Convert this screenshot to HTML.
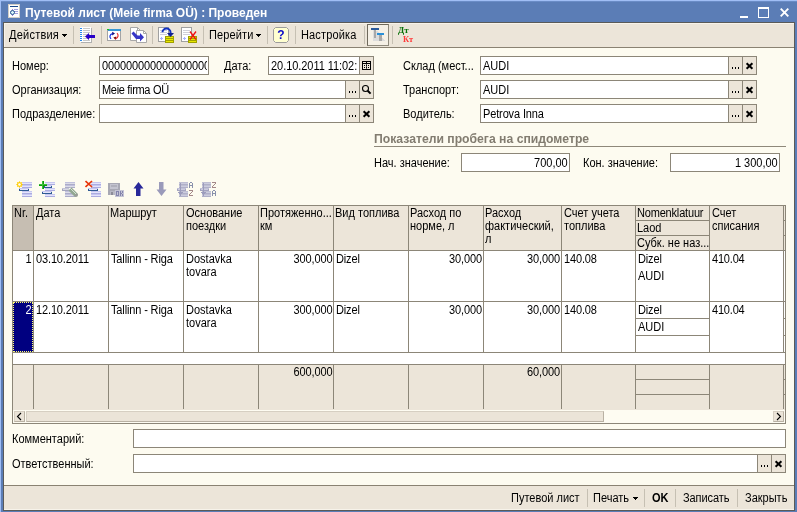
<!DOCTYPE html>
<html><head><meta charset="utf-8">
<style>
*{box-sizing:border-box;margin:0;padding:0}
html,body{width:797px;height:512px;overflow:hidden;background:#5a7db5;font-family:"Liberation Sans",sans-serif;font-size:11px;color:#000}
.abs{position:absolute}
#win{position:absolute;left:0;top:0;width:797px;height:512px;background:#5b7db6;will-change:transform}
#topl{position:absolute;left:0;top:0;width:797px;height:1px;background:#a0bef5}
#topl2{position:absolute;left:1px;top:1px;width:796px;height:1px;background:#6a8cc6}
#leftl{position:absolute;left:0;top:0;width:1px;height:512px;background:#a0bef5}
#inner{position:absolute;left:3px;top:22px;width:792px;height:489px;background:#5a5a58}
#title{position:absolute;left:25px;top:6px;color:#fff;font-weight:bold;font-size:12px;line-height:14px;white-space:nowrap;letter-spacing:0px}
#tb{position:absolute;left:4px;top:23px;width:790px;height:24px;background:#ece5d9;border-left:1px solid #f8f3ea;border-top:1px solid #f8f3ea}
#tbline{position:absolute;left:4px;top:47px;width:790px;height:1px;background:#8a8272}
#body{position:absolute;left:4px;top:48px;width:790px;height:437px;background:#fdfbf0}
#foot{position:absolute;left:4px;top:485px;width:790px;height:25px;background:#ece5d9;border-top:1px solid #8a8272;border-bottom:1px solid #f7f3ea}
.lbl{position:absolute;white-space:nowrap;font-size:12px;line-height:13px;transform:scaleX(0.917);transform-origin:0 0}
.lbl.ra{transform-origin:100% 0}
.t{display:inline-block;font-size:12px;line-height:13px;transform:scaleX(0.917);transform-origin:0 0;white-space:nowrap}
.r .t{transform-origin:100% 0}
.inp{position:absolute;height:19px;background:#fff;border:1px solid #8c8678;font-size:11px;line-height:13px;padding:3px 0 0 2px;white-space:nowrap;overflow:hidden}
.btn{position:absolute;height:19px;width:15px;background:#ece5d9;border:1px solid #8c8678;border-left:none;font-size:11px;line-height:13px;text-align:center;font-weight:bold}
.clip{display:block;overflow:hidden;white-space:nowrap;height:13px}
.r{text-align:right;padding-right:1px}
.btn svg{position:absolute;left:0;top:0}
.tbt{position:absolute;top:29px;font-size:12px;line-height:13px;white-space:nowrap;transform:scaleX(0.917);transform-origin:0 0}
.sb{background:#ebe4d8;border:1px solid #b9b1a3;border-top-color:#d6cfc2;border-left-color:#d6cfc2}
.sep{position:absolute;top:26px;width:1px;height:18px;background:#c6c0b3}
</style></head><body>
<div id="win">
<div id="topl"></div><div id="topl2"></div><div id="leftl"></div><div id="inner"></div>
<!-- title icon -->
<svg class="abs" style="left:8px;top:4px" width="12" height="14" viewBox="0 0 12 14"><rect x="0" y="0" width="12" height="14" fill="#d2cec6"/><rect x="1" y="1" width="10" height="12" fill="#fff"/><rect x="2" y="2" width="8" height="1" fill="#1c4a8c" shape-rendering="crispEdges"/><rect x="6" y="5" width="4" height="1" fill="#a0a0e0"/><rect x="6" y="7" width="4" height="1" fill="#a0a0e0"/><rect x="7" y="9" width="3" height="1" fill="#a0a0e0"/><circle cx="4.5" cy="8.5" r="2" fill="#d8f4f8" stroke="#1c4a8c" stroke-width="1"/><rect x="4" y="5" width="1" height="1" fill="#9c80d8"/><rect x="4" y="11" width="1" height="1" fill="#9c80d8"/></svg>
<div id="title">Путевой лист (Meie firma OÜ) : Проведен</div>
<!-- window buttons -->
<div class="abs" style="left:740px;top:16px;width:8px;height:2px;background:#fff"></div>
<div class="abs" style="left:758px;top:7px;width:11px;height:11px;border:1px solid #fff;border-top:2px solid #fff"></div>
<svg class="abs" style="left:780px;top:8px" width="9" height="9" viewBox="0 0 9 9"><path d="M0.7 0.7L8.3 8.3M8.3 0.7L0.7 8.3" stroke="#fff" stroke-width="1.9"/></svg>

<div id="tb"></div>
<div id="tbline"></div>
<div class="tbt" style="left:9px;letter-spacing:0.25px">Действия</div>
<svg class="abs" style="left:62px;top:34px" width="5" height="3" shape-rendering="crispEdges"><rect x="0" y="0" width="5" height="1"/><rect x="1" y="1" width="3" height="1"/><rect x="2" y="2" width="1" height="1"/></svg>
<div class="sep" style="left:73px"></div>
<div class="sep" style="left:101px"></div>
<div class="sep" style="left:152px"></div>
<div class="sep" style="left:203px"></div>
<div class="tbt" style="left:209px;letter-spacing:0.15px">Перейти</div>
<svg class="abs" style="left:256px;top:34px" width="5" height="3" shape-rendering="crispEdges"><rect x="0" y="0" width="5" height="1"/><rect x="1" y="1" width="3" height="1"/><rect x="2" y="2" width="1" height="1"/></svg>
<div class="sep" style="left:267px"></div>
<div class="sep" style="left:295px"></div>
<div class="tbt" style="left:301px;letter-spacing:0.15px">Настройка</div>
<div class="sep" style="left:364px"></div>
<div class="sep" style="left:392px"></div>

<div id="body"></div>
<!-- icons -->
<svg class="abs" style="left:79px;top:27px" width="17" height="16" viewBox="0 0 17 16" ><rect x="1" y="0" width="11" height="15" fill="#fff"/><rect x="12" y="1" width="1" height="15" fill="#b0b0b0"/><rect x="2" y="15" width="11" height="1" fill="#b0b0b0"/><rect x="1" y="1" width="2" height="1" fill="#2a8cf0"/><rect x="4" y="1" width="7" height="1" fill="#c8c8c8"/><rect x="1" y="3" width="2" height="1" fill="#2a8cf0"/><rect x="4" y="3" width="7" height="1" fill="#c8c8c8"/><rect x="1" y="5" width="2" height="1" fill="#2a8cf0"/><rect x="4" y="5" width="7" height="1" fill="#c8c8c8"/><rect x="1" y="7" width="2" height="1" fill="#2a8cf0"/><rect x="4" y="7" width="7" height="1" fill="#c8c8c8"/><rect x="1" y="9" width="2" height="1" fill="#2a8cf0"/><rect x="4" y="9" width="7" height="1" fill="#c8c8c8"/><rect x="1" y="11" width="2" height="1" fill="#2a8cf0"/><rect x="4" y="11" width="7" height="1" fill="#c8c8c8"/><rect x="1" y="13" width="2" height="1" fill="#2a8cf0"/><rect x="4" y="13" width="7" height="1" fill="#c8c8c8"/><path d="M6 9.5L10 6V8H16V11H10V13Z" fill="#2800c8"/></svg>
<svg class="abs" style="left:107px;top:28px" width="15" height="13" viewBox="0 0 15 13"><rect x="0.5" y="1.5" width="13" height="11" fill="#fff" stroke="#a4a4a4"/><rect x="1" y="1" width="13" height="2" fill="#3898d4"/><rect x="0" y="1" width="2" height="1" fill="#18c818"/><path d="M4 10.8C2.2 9 2.6 6.3 5.5 5.6" stroke="#1030e8" stroke-width="1.2" fill="none"/><path d="M5.2 3.8L8 5.6L5.2 7.4Z" fill="#0c0c80"/><path d="M10 5.2C11.8 7 11.4 9.7 8.8 10.6" stroke="#e83030" stroke-width="1.2" fill="none"/><path d="M9.4 8.6L6.4 9.4L8.6 12Z" fill="#800808"/></svg>
<svg class="abs" style="left:130px;top:27px" width="17" height="16" viewBox="0 0 17 16"><path d="M0.5 0.5H7.5L10.5 3.5V13.5H0.5Z" fill="#fff" stroke="#a8a8a8"/><path d="M7.5 0.5V3.5H10.5" fill="none" stroke="#a8a8a8"/><path d="M6.5 3.5H13.5L16.5 6.5V15.5H6.5Z" fill="#fff" stroke="#a8a8a8"/><path d="M13.5 3.5V6.5H16.5" fill="none" stroke="#a8a8a8"/><path d="M1.5 6.5L3.5 4.5L7.5 8.5H10V6L14 10.2L10 14.4V12H6Z" fill="#3636c6"/></svg>
<svg class="abs" style="left:158px;top:27px" width="16" height="16" viewBox="0 0 16 16" ><rect x="0.5" y="0.5" width="10" height="14" fill="#fff" stroke="#a0a0a0"/><rect x="2" y="3" width="7" height="1" fill="#d0d0d8"/><rect x="2" y="5" width="7" height="1" fill="#d0d0d8"/><rect x="2" y="7" width="7" height="1" fill="#d0d0d8"/><rect x="3" y="10" width="1" height="3" fill="#a8b4ff"/><rect x="2" y="11" width="3" height="1" fill="#a8b4ff"/><rect x="7" y="9" width="9" height="7" fill="#e8e800"/><rect x="7" y="9" width="9" height="1" fill="#a0a000"/><rect x="7" y="11" width="9" height="1" fill="#a0a000"/><rect x="7" y="13" width="9" height="1" fill="#a0a000"/><rect x="7" y="15" width="9" height="1" fill="#a0a000"/><rect x="7" y="9" width="1" height="7" fill="#a0a000"/><rect x="15" y="9" width="1" height="7" fill="#a0a000"/><path d="M4.5 5.2A4 3.6 0 0 1 12.5 5.2V6.5" stroke="#1030c0" stroke-width="2" fill="none"/><path d="M9 6H16L12.5 10Z" fill="#102090"/></svg>
<svg class="abs" style="left:181px;top:27px" width="16" height="16" viewBox="0 0 16 16" ><rect x="0.5" y="0.5" width="10" height="14" fill="#fff" stroke="#a0a0a0"/><rect x="2" y="3" width="7" height="1" fill="#d0d0d8"/><rect x="2" y="5" width="7" height="1" fill="#d0d0d8"/><rect x="2" y="7" width="7" height="1" fill="#d0d0d8"/><rect x="3" y="10" width="1" height="3" fill="#a8b4ff"/><rect x="2" y="11" width="3" height="1" fill="#a8b4ff"/><rect x="7" y="9" width="9" height="7" fill="#e8e800"/><rect x="7" y="9" width="9" height="1" fill="#a0a000"/><rect x="7" y="11" width="9" height="1" fill="#a0a000"/><rect x="7" y="13" width="9" height="1" fill="#a0a000"/><rect x="7" y="15" width="9" height="1" fill="#a0a000"/><rect x="7" y="9" width="1" height="7" fill="#a0a000"/><rect x="15" y="9" width="1" height="7" fill="#a0a000"/><path d="M9 4.5L15 12.5M15 4.5L9 12.5" stroke="#f01010" stroke-width="1.3"/></svg>
<svg class="abs" style="left:273px;top:27px" width="16" height="16" viewBox="0 0 16 16" ><path d="M2.5 0.5H13.5L15.5 2.5V13.5L13.5 15.5H2.5L0.5 13.5V2.5Z" fill="#ffffd0" stroke="#9c9c9c"/><text x="8" y="12" font-family="Liberation Sans" font-weight="bold" font-size="12" fill="#0808c8" text-anchor="middle">?</text></svg>
<div class="abs" style="left:367px;top:24px;width:22px;height:22px;background:#f5f0e6;border:1px solid #6e695c;border-right-color:#8e897c;border-bottom-color:#8e897c"></div>
<svg class="abs" style="left:371px;top:28px" width="14" height="14" viewBox="0 0 14 14" shape-rendering="crispEdges"><path d="M2 2V13H14L8 7V4Z" fill="#dcdcdc"/><rect x="0" y="0" width="8" height="2" fill="#2a5a9a"/><rect x="3" y="2" width="2" height="8" fill="#a8a8a8"/><rect x="6" y="5" width="7" height="2" fill="#2a90d8"/><rect x="8" y="7" width="3" height="6" fill="#a8a8a8"/></svg>
<div class="abs" style="left:398px;top:27px;font-family:'Liberation Serif',serif;font-weight:bold;font-size:8px;line-height:8px;color:#087008;transform:scaleX(1.12);transform-origin:0 0">Дт</div>
<div class="abs" style="left:403px;top:36px;font-family:'Liberation Serif',serif;font-weight:bold;font-size:7.5px;line-height:8px;color:#ff3838;transform:scaleX(1.12);transform-origin:0 0">Кт</div>
<svg class="abs" style="left:16px;top:181px" width="17" height="17" viewBox="0 0 17 17" shape-rendering="crispEdges"><rect x="6" y="1" width="10" height="1" fill="#c6c6f0"/><rect x="6" y="2" width="10" height="1" fill="#e4e4fb"/><rect x="6" y="3" width="10" height="1" fill="#acace0"/><rect x="6" y="4" width="10" height="1" fill="#c6c6f0"/><rect x="6" y="5" width="10" height="1" fill="#e4e4fb"/><rect x="6" y="6" width="10" height="1" fill="#acace0"/><rect x="3" y="7" width="10" height="1" fill="#c6c6f0"/><rect x="3" y="8" width="10" height="1" fill="#e4e4fb"/><rect x="3" y="9" width="10" height="1" fill="#2f5a92"/><rect x="3" y="8" width="1" height="2" fill="#2f5a92"/><rect x="12" y="8" width="1" height="2" fill="#2f5a92"/><rect x="6" y="10" width="10" height="1" fill="#c6c6f0"/><rect x="6" y="11" width="10" height="1" fill="#e4e4fb"/><rect x="6" y="12" width="10" height="1" fill="#acace0"/><rect x="6" y="13" width="10" height="1" fill="#c6c6f0"/><rect x="6" y="14" width="10" height="1" fill="#e4e4fb"/><rect x="6" y="15" width="10" height="1" fill="#acace0"/><g shape-rendering="auto"><path d="M3.5 0L4.4 1.6L6 1L5.6 2.7L7 3.5L5.6 4.4L6 6L4.4 5.5L3.5 7L2.6 5.5L1 6L1.4 4.4L0 3.5L1.4 2.7L1 1L2.6 1.6Z" fill="#ffcc00"/><circle cx="3.5" cy="3.5" r="1.3" fill="#fff"/></g></svg>
<svg class="abs" style="left:39px;top:181px" width="17" height="17" viewBox="0 0 17 17" shape-rendering="crispEdges"><rect x="6" y="1" width="10" height="1" fill="#c6c6f0"/><rect x="6" y="2" width="10" height="1" fill="#e4e4fb"/><rect x="6" y="3" width="10" height="1" fill="#acace0"/><rect x="5" y="4" width="8" height="1" fill="#c6c6f0"/><rect x="5" y="5" width="8" height="1" fill="#e4e4fb"/><rect x="5" y="6" width="8" height="1" fill="#2f5a92"/><rect x="5" y="5" width="1" height="2" fill="#2f5a92"/><rect x="12" y="5" width="1" height="2" fill="#2f5a92"/><rect x="6" y="7" width="10" height="1" fill="#c6c6f0"/><rect x="6" y="8" width="10" height="1" fill="#e4e4fb"/><rect x="6" y="9" width="10" height="1" fill="#acace0"/><rect x="3" y="10" width="10" height="1" fill="#c6c6f0"/><rect x="3" y="11" width="10" height="1" fill="#e4e4fb"/><rect x="3" y="12" width="10" height="1" fill="#2f5a92"/><rect x="3" y="11" width="1" height="2" fill="#2f5a92"/><rect x="12" y="11" width="1" height="2" fill="#2f5a92"/><rect x="6" y="13" width="10" height="1" fill="#c6c6f0"/><rect x="6" y="14" width="10" height="1" fill="#e4e4fb"/><rect x="6" y="15" width="10" height="1" fill="#acace0"/><rect x="3" y="0" width="2" height="8" fill="#0a9a0a"/><rect x="0" y="3" width="8" height="2" fill="#0a9a0a"/><rect x="3" y="0" width="1" height="8" fill="#38c038"/><rect x="0" y="3" width="8" height="1" fill="#38c038"/></svg>
<svg class="abs" style="left:62px;top:181px" width="17" height="17" viewBox="0 0 17 17" shape-rendering="crispEdges"><rect x="3" y="1" width="10" height="1" fill="#c0c0dc"/><rect x="3" y="2" width="10" height="1" fill="#dcdce8"/><rect x="3" y="3" width="10" height="1" fill="#acacc8"/><rect x="3" y="4" width="10" height="1" fill="#c0c0dc"/><rect x="3" y="5" width="10" height="1" fill="#dcdce8"/><rect x="3" y="6" width="10" height="1" fill="#acacc8"/><rect x="0" y="7" width="10" height="1" fill="#c4c4d8"/><rect x="0" y="8" width="10" height="1" fill="#d8d8e4"/><rect x="0" y="9" width="10" height="1" fill="#a4a4bc"/><rect x="0" y="8" width="1" height="2" fill="#a4a4bc"/><rect x="9" y="8" width="1" height="2" fill="#a4a4bc"/><rect x="3" y="10" width="10" height="1" fill="#c0c0dc"/><rect x="3" y="11" width="10" height="1" fill="#dcdce8"/><rect x="3" y="12" width="10" height="1" fill="#acacc8"/><rect x="3" y="13" width="10" height="1" fill="#c0c0dc"/><rect x="3" y="14" width="10" height="1" fill="#dcdce8"/><rect x="3" y="15" width="10" height="1" fill="#acacc8"/><g shape-rendering="auto"><path d="M7 7L9.5 6.5L16 13L15.5 15.5L13 16L6.5 9.5Z" fill="#92a892"/><path d="M8.5 7.5L15 14" stroke="#d4e0d4" stroke-width="1"/><path d="M7 7L9.5 6.5L6.5 9.5Z" fill="#f4f4f4"/><path d="M14.5 12.5L16 14L14 16L12.5 14.5Z" fill="#9a9a9a"/></g></svg>
<svg class="abs" style="left:85px;top:180px" width="17" height="18" viewBox="0 0 17 18" shape-rendering="crispEdges"><rect x="6" y="2" width="10" height="1" fill="#c6c6f0"/><rect x="6" y="3" width="10" height="1" fill="#e4e4fb"/><rect x="6" y="4" width="10" height="1" fill="#acace0"/><rect x="6" y="5" width="10" height="1" fill="#c6c6f0"/><rect x="6" y="6" width="10" height="1" fill="#e4e4fb"/><rect x="6" y="7" width="10" height="1" fill="#acace0"/><rect x="3" y="8" width="10" height="1" fill="#c6c6f0"/><rect x="3" y="9" width="10" height="1" fill="#e4e4fb"/><rect x="3" y="10" width="10" height="1" fill="#2f5a92"/><rect x="3" y="9" width="1" height="2" fill="#2f5a92"/><rect x="12" y="9" width="1" height="2" fill="#2f5a92"/><rect x="6" y="11" width="10" height="1" fill="#c6c6f0"/><rect x="6" y="12" width="10" height="1" fill="#e4e4fb"/><rect x="6" y="13" width="10" height="1" fill="#acace0"/><rect x="6" y="14" width="10" height="1" fill="#c6c6f0"/><rect x="6" y="15" width="10" height="1" fill="#e4e4fb"/><rect x="6" y="16" width="10" height="1" fill="#acace0"/><g shape-rendering="auto"><path d="M0.5 1L7 7M7 1L0.5 7" stroke="#e83408" stroke-width="1.7"/></g></svg>
<svg class="abs" style="left:108px;top:183px" width="16" height="14" viewBox="0 0 16 14" shape-rendering="crispEdges"><rect x="0" y="0" width="12" height="12" fill="#a8a8b4"/><rect x="2" y="1" width="8" height="5" fill="#c4c4d0"/><rect x="3" y="2" width="6" height="2" fill="#b0b0bc"/><rect x="2" y="8" width="7" height="4" fill="#b8b8c4"/><rect x="3" y="9" width="2" height="3" fill="#8c8c98"/><rect x="7" y="7" width="9" height="7" fill="#c4c4d4"/><rect x="8" y="8" width="3" height="5" fill="#8484ac"/><rect x="9" y="9" width="1" height="3" fill="#c4c4d4"/><rect x="12" y="8" width="1" height="5" fill="#8484ac"/><rect x="13" y="10" width="1" height="1" fill="#8484ac"/><rect x="14" y="8" width="1" height="2" fill="#8484ac"/><rect x="14" y="11" width="1" height="2" fill="#8484ac"/></svg>
<svg class="abs" style="left:133px;top:182px" width="11" height="14" viewBox="0 0 11 14" ><path d="M5.5 0L10.5 6.5H7.5V14H3V6.5H0.5Z" fill="#28289a"/></svg>
<svg class="abs" style="left:156px;top:182px" width="11" height="14" viewBox="0 0 11 14" ><path d="M5.5 14L10.5 7.5H7.5V0H3V7.5H0.5Z" fill="#9a9aba"/></svg>
<svg class="abs" style="left:177px;top:181px" width="17" height="17" viewBox="0 0 17 17" shape-rendering="crispEdges"><rect x="2" y="1" width="9" height="1" fill="#bebed2"/><rect x="2" y="2" width="9" height="1" fill="#ccccde"/><rect x="2" y="3" width="9" height="1" fill="#b0b0c8"/><rect x="2" y="4" width="9" height="1" fill="#bebed2"/><rect x="2" y="5" width="9" height="1" fill="#ccccde"/><rect x="2" y="6" width="9" height="1" fill="#b0b0c8"/><rect x="0" y="7" width="9" height="1" fill="#c0c0d8"/><rect x="0" y="8" width="9" height="1" fill="#ccccde"/><rect x="0" y="9" width="9" height="1" fill="#a4a4c0"/><rect x="0" y="8" width="1" height="2" fill="#a4a4c0"/><rect x="8" y="8" width="1" height="2" fill="#a4a4c0"/><rect x="2" y="10" width="9" height="1" fill="#bebed2"/><rect x="2" y="11" width="9" height="1" fill="#ccccde"/><rect x="2" y="12" width="9" height="1" fill="#b0b0c8"/><rect x="2" y="13" width="9" height="1" fill="#bebed2"/><rect x="2" y="14" width="9" height="1" fill="#ccccde"/><rect x="2" y="15" width="9" height="1" fill="#b0b0c8"/><rect x="3" y="2" width="1" height="12" fill="#9c9cbc"/><rect x="1" y="11" width="5" height="1" fill="#9c9cbc"/><rect x="2" y="12" width="3" height="1" fill="#9c9cbc"/><rect x="3" y="13" width="1" height="2" fill="#9c9cbc"/><rect x="12" y="2" width="1" height="5" fill="#8890ac"/><rect x="15" y="2" width="1" height="5" fill="#8890ac"/><rect x="13" y="1" width="2" height="1" fill="#8890ac"/><rect x="13" y="4" width="2" height="1" fill="#8890ac"/><rect x="12" y="9" width="4" height="1" fill="#a48888"/><rect x="12" y="14" width="4" height="1" fill="#a48888"/><rect x="15" y="10" width="1" height="1" fill="#a48888"/><rect x="14" y="11" width="1" height="1" fill="#a48888"/><rect x="13" y="12" width="1" height="1" fill="#a48888"/><rect x="12" y="13" width="1" height="1" fill="#a48888"/></svg>
<svg class="abs" style="left:200px;top:181px" width="17" height="17" viewBox="0 0 17 17" shape-rendering="crispEdges"><rect x="2" y="1" width="9" height="1" fill="#bebed2"/><rect x="2" y="2" width="9" height="1" fill="#ccccde"/><rect x="2" y="3" width="9" height="1" fill="#b0b0c8"/><rect x="2" y="4" width="9" height="1" fill="#bebed2"/><rect x="2" y="5" width="9" height="1" fill="#ccccde"/><rect x="2" y="6" width="9" height="1" fill="#b0b0c8"/><rect x="0" y="7" width="9" height="1" fill="#c0c0d8"/><rect x="0" y="8" width="9" height="1" fill="#ccccde"/><rect x="0" y="9" width="9" height="1" fill="#a4a4c0"/><rect x="0" y="8" width="1" height="2" fill="#a4a4c0"/><rect x="8" y="8" width="1" height="2" fill="#a4a4c0"/><rect x="2" y="10" width="9" height="1" fill="#bebed2"/><rect x="2" y="11" width="9" height="1" fill="#ccccde"/><rect x="2" y="12" width="9" height="1" fill="#b0b0c8"/><rect x="2" y="13" width="9" height="1" fill="#bebed2"/><rect x="2" y="14" width="9" height="1" fill="#ccccde"/><rect x="2" y="15" width="9" height="1" fill="#b0b0c8"/><rect x="3" y="2" width="1" height="12" fill="#9c9cbc"/><rect x="1" y="11" width="5" height="1" fill="#9c9cbc"/><rect x="2" y="12" width="3" height="1" fill="#9c9cbc"/><rect x="3" y="13" width="1" height="2" fill="#9c9cbc"/><rect x="12" y="1" width="4" height="1" fill="#a48888"/><rect x="12" y="6" width="4" height="1" fill="#a48888"/><rect x="15" y="2" width="1" height="1" fill="#a48888"/><rect x="14" y="3" width="1" height="1" fill="#a48888"/><rect x="13" y="4" width="1" height="1" fill="#a48888"/><rect x="12" y="5" width="1" height="1" fill="#a48888"/><rect x="12" y="10" width="1" height="5" fill="#8890ac"/><rect x="15" y="10" width="1" height="5" fill="#8890ac"/><rect x="13" y="9" width="2" height="1" fill="#8890ac"/><rect x="13" y="12" width="2" height="1" fill="#8890ac"/></svg>
<!-- /icons -->

<!-- row 1 -->
<div class="lbl" style="left:12px;top:60px">Номер:</div>
<div class="inp" style="left:99px;top:56px;width:110px"><span class="clip" style="width:105px"><span class="t" style="letter-spacing:-0.13px">000000000000000000</span></span></div>
<div class="lbl" style="left:224px;top:60px">Дата:</div>
<div class="inp" style="left:268px;top:56px;width:92px"><span class="clip" style="width:87px"><span class="t" style="letter-spacing:-0.06px">20.10.2011 11:02:</span></span></div>
<div class="btn" style="left:360px;top:56px;width:14px"><svg width="13" height="17" shape-rendering="crispEdges"><rect x="2" y="4" width="9" height="9" fill="#000"/><rect x="3" y="5" width="3" height="1" fill="#efe8dc"/><rect x="7" y="5" width="3" height="1" fill="#efe8dc"/><rect x="3" y="7" width="7" height="5" fill="#efe8dc"/><rect x="4" y="8" width="1" height="1" fill="#000"/><rect x="6" y="8" width="1" height="1" fill="#000"/><rect x="8" y="8" width="1" height="1" fill="#000"/><rect x="4" y="10" width="1" height="1" fill="#000"/><rect x="6" y="10" width="1" height="1" fill="#000"/><rect x="8" y="10" width="1" height="1" fill="#000"/><rect x="6" y="7" width="1" height="1" fill="#555"/><rect x="6" y="9" width="1" height="1" fill="#555"/><rect x="6" y="11" width="1" height="1" fill="#555"/></svg></div>
<div class="lbl" style="left:403px;top:60px">Склад (мест...</div>
<div class="inp" style="left:480px;top:56px;width:249px"><span class="t">AUDI</span></div>
<div class="btn" style="left:729px;top:56px;width:14px"><svg width="13" height="17" shape-rendering="crispEdges"><rect x="3" y="10" width="1" height="2" fill="#000"/><rect x="6" y="10" width="1" height="2" fill="#000"/><rect x="9" y="10" width="1" height="2" fill="#000"/></svg></div>
<div class="btn" style="left:743px;top:56px;width:14px"><svg width="13" height="17"><path d="M3.6 6.2L9.4 11.8M9.4 6.2L3.6 11.8" stroke="#000" stroke-width="2"/></svg></div>
<!-- row 2 -->
<div class="lbl" style="left:12px;top:84px">Организация:</div>
<div class="inp" style="left:99px;top:80px;width:247px;letter-spacing:-0.35px"><span class="t">Meie firma OÜ</span></div>
<div class="btn" style="left:346px;top:80px;width:14px"><svg width="13" height="17" shape-rendering="crispEdges"><rect x="3" y="10" width="1" height="2" fill="#000"/><rect x="6" y="10" width="1" height="2" fill="#000"/><rect x="9" y="10" width="1" height="2" fill="#000"/></svg></div>
<div class="btn" style="left:360px;top:80px;width:14px"><svg width="13" height="17"><circle cx="5.5" cy="7.5" r="3" fill="none" stroke="#000" stroke-width="1.1"/><path d="M7.7 9.7L10.6 12.6" stroke="#000" stroke-width="2"/></svg></div>
<div class="lbl" style="left:403px;top:84px">Транспорт:</div>
<div class="inp" style="left:480px;top:80px;width:249px"><span class="t">AUDI</span></div>
<div class="btn" style="left:729px;top:80px;width:14px"><svg width="13" height="17" shape-rendering="crispEdges"><rect x="3" y="10" width="1" height="2" fill="#000"/><rect x="6" y="10" width="1" height="2" fill="#000"/><rect x="9" y="10" width="1" height="2" fill="#000"/></svg></div>
<div class="btn" style="left:743px;top:80px;width:14px"><svg width="13" height="17"><path d="M3.6 6.2L9.4 11.8M9.4 6.2L3.6 11.8" stroke="#000" stroke-width="2"/></svg></div>
<!-- row 3 -->
<div class="lbl" style="left:12px;top:108px">Подразделение:</div>
<div class="inp" style="left:99px;top:104px;width:247px"></div>
<div class="btn" style="left:346px;top:104px;width:14px"><svg width="13" height="17" shape-rendering="crispEdges"><rect x="3" y="10" width="1" height="2" fill="#000"/><rect x="6" y="10" width="1" height="2" fill="#000"/><rect x="9" y="10" width="1" height="2" fill="#000"/></svg></div>
<div class="btn" style="left:360px;top:104px;width:14px"><svg width="13" height="17"><path d="M3.6 6.2L9.4 11.8M9.4 6.2L3.6 11.8" stroke="#000" stroke-width="2"/></svg></div>
<div class="lbl" style="left:403px;top:108px">Водитель:</div>
<div class="inp" style="left:480px;top:104px;width:249px;letter-spacing:-0.15px"><span class="t">Petrova Inna</span></div>
<div class="btn" style="left:729px;top:104px;width:14px"><svg width="13" height="17" shape-rendering="crispEdges"><rect x="3" y="10" width="1" height="2" fill="#000"/><rect x="6" y="10" width="1" height="2" fill="#000"/><rect x="9" y="10" width="1" height="2" fill="#000"/></svg></div>
<div class="btn" style="left:743px;top:104px;width:14px"><svg width="13" height="17"><path d="M3.6 6.2L9.4 11.8M9.4 6.2L3.6 11.8" stroke="#000" stroke-width="2"/></svg></div>

<!-- section -->
<div class="lbl" style="left:374px;top:133px;font-weight:bold;color:#827c70;transform:scaleX(1.016);transform-origin:0 0">Показатели пробега на спидометре</div>
<div class="abs" style="left:374px;top:146px;width:412px;height:1px;background:#8e887a"></div>
<div class="lbl" style="left:374px;top:157px">Нач. значение:</div>
<div class="inp r" style="left:461px;top:153px;width:109px"><span class="t">700,00</span></div>
<div class="lbl" style="left:583px;top:157px">Кон. значение:</div>
<div class="inp r" style="left:670px;top:153px;width:110px"><span class="t">1 300,00</span></div>

<!-- table -->
<div class="abs" style="left:12px;top:205px;width:774px;height:219px;background:#fff;border:1px solid #8c8678"></div>
<div class="abs" style="left:13px;top:206px;width:772px;height:44px;background:#ece5d9"></div>
<div class="abs" style="left:13px;top:206px;width:20px;height:44px;background:#c6beb2"></div>
<div class="abs" style="left:13px;top:365px;width:772px;height:45px;background:#ece5d9"></div>
<div class="abs" style="left:13px;top:410px;width:772px;height:13px;background:#fefcf2"></div>
<div class="abs sb" style="left:26px;top:411px;width:578px;height:11px"></div>
<div class="abs sb" style="left:14px;top:411px;width:11px;height:11px"></div>
<div class="abs sb" style="left:773px;top:411px;width:11px;height:11px"></div>
<svg class="abs" style="left:14px;top:411px" width="11" height="11"><path d="M7 2L3.5 5.5L7 9" stroke="#000" stroke-width="1.1" fill="none"/></svg>
<svg class="abs" style="left:773px;top:411px" width="11" height="11"><path d="M4 2L7.5 5.5L4 9" stroke="#000" stroke-width="1.1" fill="none"/></svg>
<div class="abs" style="left:13px;top:250px;width:772px;height:1px;background:#8c8678"></div>
<div class="abs" style="left:13px;top:301px;width:772px;height:1px;background:#8c8678"></div>
<div class="abs" style="left:13px;top:352px;width:772px;height:1px;background:#8c8678"></div>
<div class="abs" style="left:13px;top:364px;width:772px;height:1px;background:#8c8678"></div>
<div class="abs" style="left:33px;top:206px;width:1px;height:147px;background:#8c8678"></div>
<div class="abs" style="left:33px;top:365px;width:1px;height:44px;background:#8c8678"></div>
<div class="abs" style="left:108px;top:206px;width:1px;height:147px;background:#8c8678"></div>
<div class="abs" style="left:108px;top:365px;width:1px;height:44px;background:#8c8678"></div>
<div class="abs" style="left:183px;top:206px;width:1px;height:147px;background:#8c8678"></div>
<div class="abs" style="left:183px;top:365px;width:1px;height:44px;background:#8c8678"></div>
<div class="abs" style="left:258px;top:206px;width:1px;height:147px;background:#8c8678"></div>
<div class="abs" style="left:258px;top:365px;width:1px;height:44px;background:#8c8678"></div>
<div class="abs" style="left:333px;top:206px;width:1px;height:147px;background:#8c8678"></div>
<div class="abs" style="left:333px;top:365px;width:1px;height:44px;background:#8c8678"></div>
<div class="abs" style="left:408px;top:206px;width:1px;height:147px;background:#8c8678"></div>
<div class="abs" style="left:408px;top:365px;width:1px;height:44px;background:#8c8678"></div>
<div class="abs" style="left:483px;top:206px;width:1px;height:147px;background:#8c8678"></div>
<div class="abs" style="left:483px;top:365px;width:1px;height:44px;background:#8c8678"></div>
<div class="abs" style="left:561px;top:206px;width:1px;height:147px;background:#8c8678"></div>
<div class="abs" style="left:561px;top:365px;width:1px;height:44px;background:#8c8678"></div>
<div class="abs" style="left:635px;top:206px;width:1px;height:147px;background:#8c8678"></div>
<div class="abs" style="left:635px;top:365px;width:1px;height:44px;background:#8c8678"></div>
<div class="abs" style="left:709px;top:206px;width:1px;height:147px;background:#8c8678"></div>
<div class="abs" style="left:709px;top:365px;width:1px;height:44px;background:#8c8678"></div>
<div class="abs" style="left:783px;top:206px;width:1px;height:147px;background:#8c8678"></div>
<div class="abs" style="left:783px;top:365px;width:1px;height:44px;background:#8c8678"></div>
<div class="abs" style="left:636px;top:220px;width:73px;height:1px;background:#8c8678"></div>
<div class="abs" style="left:636px;top:235px;width:73px;height:1px;background:#8c8678"></div>
<div class="abs" style="left:636px;top:318px;width:73px;height:1px;background:#8c8678"></div>
<div class="abs" style="left:636px;top:335px;width:73px;height:1px;background:#8c8678"></div>
<div class="abs" style="left:636px;top:379px;width:73px;height:1px;background:#8c8678"></div>
<div class="abs" style="left:636px;top:394px;width:73px;height:1px;background:#8c8678"></div>
<div class="abs" style="left:13px;top:302px;width:20px;height:50px;background:#000080;border:1px dotted #ffff78"></div>
<div class="lbl" style="left:14px;top:207px;">Nr.</div>
<div class="lbl" style="left:36px;top:207px;">Дата</div>
<div class="lbl" style="left:110px;top:207px;">Маршрут</div>
<div class="lbl" style="left:186px;top:207px;">Основание<br>поездки</div>
<div class="lbl" style="left:260px;top:207px;">Протяженно...<br>км</div>
<div class="lbl" style="left:335px;top:207px;">Вид топлива</div>
<div class="lbl" style="left:410px;top:207px;">Расход по<br>норме, л</div>
<div class="lbl" style="left:485px;top:207px;">Расход<br>фактический,<br>л</div>
<div class="lbl" style="left:564px;top:207px;">Счет учета<br>топлива</div>
<div class="lbl" style="left:712px;top:207px;">Счет<br>списания</div>
<div class="lbl" style="left:637px;top:207px;letter-spacing:-0.2px">Nomenklatuur</div>
<div class="lbl" style="left:637px;top:222px;">Laod</div>
<div class="lbl" style="left:637px;top:237px;">Субк. не наз...</div>
<div class="lbl ra" style="right:765px;top:253px;">1</div>
<div class="lbl" style="left:36px;top:253px;letter-spacing:-0.15px">03.10.2011</div>
<div class="lbl" style="left:111px;top:253px;letter-spacing:-0.15px">Tallinn - Riga</div>
<div class="lbl" style="left:186px;top:253px;">Dostavka<br>tovara</div>
<div class="lbl ra" style="right:464px;top:253px;letter-spacing:-0.12px">300,000</div>
<div class="lbl" style="left:336px;top:253px;letter-spacing:-0.15px">Dizel</div>
<div class="lbl ra" style="right:315px;top:253px;letter-spacing:-0.12px">30,000</div>
<div class="lbl ra" style="right:237px;top:253px;letter-spacing:-0.12px">30,000</div>
<div class="lbl" style="left:564px;top:253px;letter-spacing:-0.15px">140.08</div>
<div class="lbl" style="left:638px;top:253px;letter-spacing:-0.15px">Dizel</div>
<div class="lbl" style="left:638px;top:270px;">AUDI</div>
<div class="lbl" style="left:712px;top:253px;letter-spacing:-0.2px">410.04</div>
<div class="lbl ra" style="right:765px;top:304px;color:#fff">2</div>
<div class="lbl" style="left:36px;top:304px;letter-spacing:-0.15px">12.10.2011</div>
<div class="lbl" style="left:111px;top:304px;letter-spacing:-0.15px">Tallinn - Riga</div>
<div class="lbl" style="left:186px;top:304px;">Dostavka<br>tovara</div>
<div class="lbl ra" style="right:464px;top:304px;letter-spacing:-0.12px">300,000</div>
<div class="lbl" style="left:336px;top:304px;letter-spacing:-0.15px">Dizel</div>
<div class="lbl ra" style="right:315px;top:304px;letter-spacing:-0.12px">30,000</div>
<div class="lbl ra" style="right:237px;top:304px;letter-spacing:-0.12px">30,000</div>
<div class="lbl" style="left:564px;top:304px;letter-spacing:-0.15px">140.08</div>
<div class="lbl" style="left:638px;top:304px;letter-spacing:-0.15px">Dizel</div>
<div class="lbl" style="left:638px;top:321px;">AUDI</div>
<div class="lbl" style="left:712px;top:304px;letter-spacing:-0.2px">410.04</div>
<div class="lbl ra" style="right:464px;top:366px;letter-spacing:-0.12px">600,000</div>
<div class="lbl ra" style="right:237px;top:366px;letter-spacing:-0.12px">60,000</div>
<div class="abs" style="left:784px;top:220px;width:1px;height:1px;background:#8c8678"></div><div class="abs" style="left:784px;top:235px;width:1px;height:1px;background:#8c8678"></div><div class="abs" style="left:784px;top:318px;width:1px;height:1px;background:#8c8678"></div><div class="abs" style="left:784px;top:335px;width:1px;height:1px;background:#8c8678"></div><div class="abs" style="left:784px;top:379px;width:1px;height:1px;background:#8c8678"></div><div class="abs" style="left:784px;top:394px;width:1px;height:1px;background:#8c8678"></div>
<!-- bottom fields -->
<div class="lbl" style="left:12px;top:433px">Комментарий:</div>
<div class="inp" style="left:133px;top:429px;width:653px"></div>
<div class="lbl" style="left:12px;top:458px">Ответственный:</div>
<div class="inp" style="left:133px;top:454px;width:625px"></div>
<div class="btn" style="left:758px;top:454px;width:14px"><svg width="13" height="17" shape-rendering="crispEdges"><rect x="3" y="10" width="1" height="2" fill="#000"/><rect x="6" y="10" width="1" height="2" fill="#000"/><rect x="9" y="10" width="1" height="2" fill="#000"/></svg></div>
<div class="btn" style="left:772px;top:454px;width:14px"><svg width="13" height="17"><path d="M3.6 6.2L9.4 11.8M9.4 6.2L3.6 11.8" stroke="#000" stroke-width="2"/></svg></div>

<div id="foot"></div>
<div class="tbt" style="left:511px;top:492px">Путевой лист</div>
<div class="sep" style="left:587px;top:489px"></div>
<div class="tbt" style="left:593px;top:492px">Печать</div>
<svg class="abs" style="left:633px;top:497px" width="5" height="3" shape-rendering="crispEdges"><rect x="0" y="0" width="5" height="1"/><rect x="1" y="1" width="3" height="1"/><rect x="2" y="2" width="1" height="1"/></svg>
<div class="sep" style="left:644px;top:489px"></div>
<div class="tbt" style="left:652px;top:492px;font-weight:bold">OK</div>
<div class="sep" style="left:675px;top:489px"></div>
<div class="tbt" style="left:683px;top:492px;letter-spacing:-0.1px">Записать</div>
<div class="sep" style="left:737px;top:489px"></div>
<div class="tbt" style="left:745px;top:492px">Закрыть</div>
</div>
</body></html>
